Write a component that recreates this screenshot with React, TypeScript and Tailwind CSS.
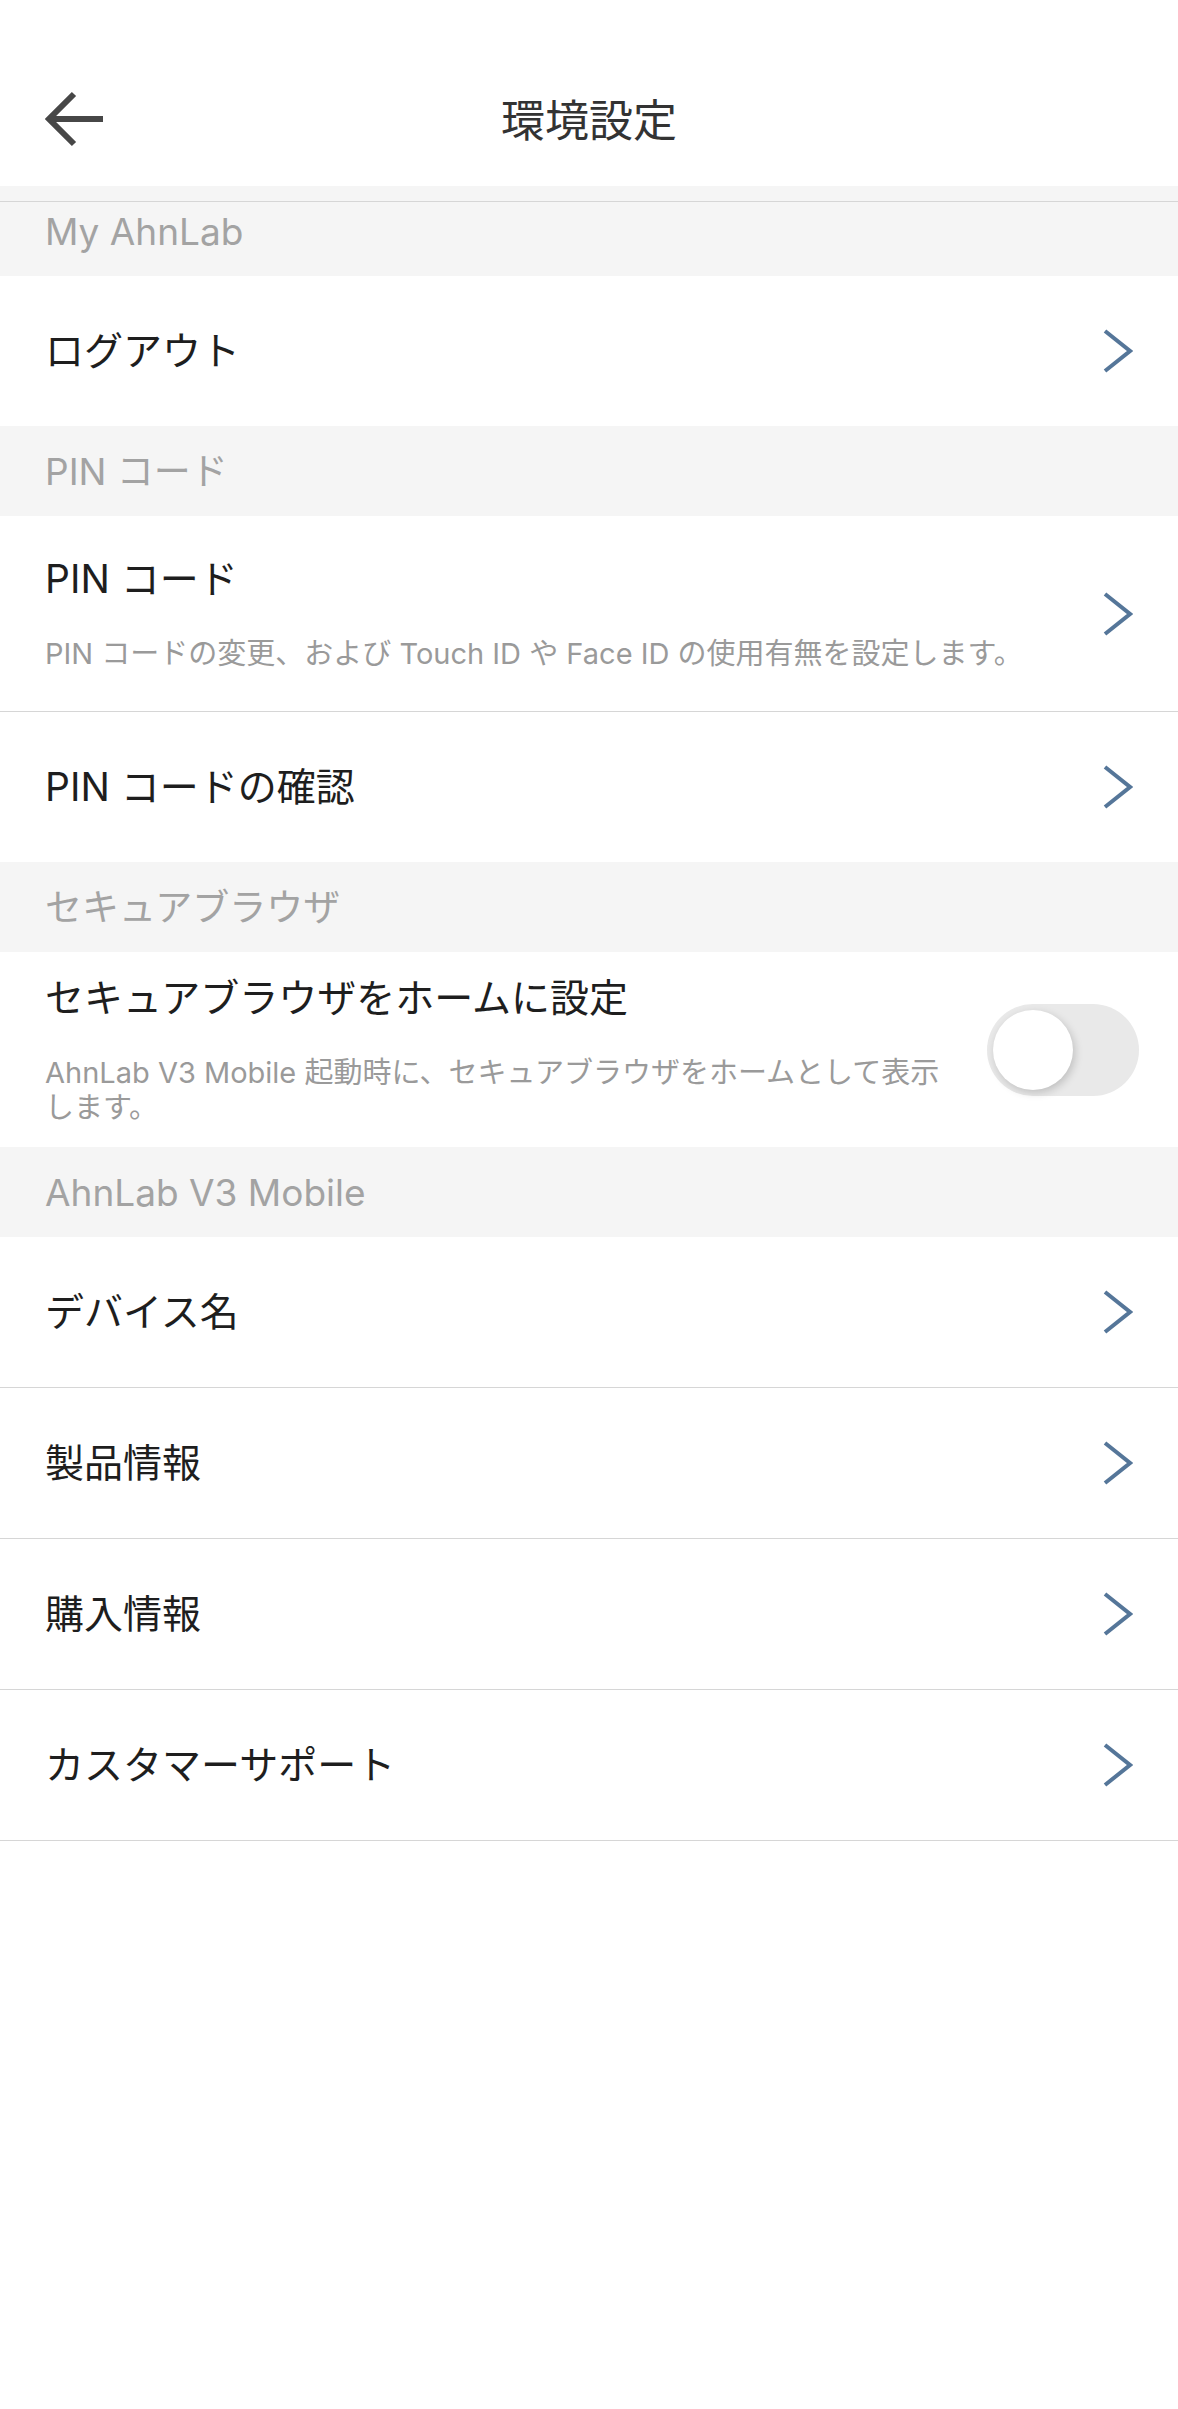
import { ReactNode } from 'react';

const font = { fontFamily: 'Inter, "Noto Sans CJK JP", sans-serif' };

function Chevron() {
  return (
    <svg width="30" height="44" viewBox="0 0 30 44" className="shrink-0">
      <polyline points="2,2 27,22 2,42" fill="none" stroke="#557699" strokeWidth="4" />
    </svg>
  );
}

function SectionHeader({ children }: { children: ReactNode }) {
  return (
    <div className="h-[90px] bg-[#f5f5f5] px-[45px] pt-[24px] text-[37px] leading-[44px] text-[#a3a3a3]">
      {children}
    </div>
  );
}

function Row({ title, border = true }: { title: string; border?: boolean }) {
  return (
    <div
      className={`flex items-center justify-between px-[45px] bg-white ${
        border ? 'h-[151px] border-b border-[#d6d6d6]' : 'h-[150px]'
      }`}
    >
      <span className="text-[39px] leading-[46px] text-[#1e1e1e]">{title}</span>
      <Chevron />
    </div>
  );
}

function Toggle() {
  return (
    <div className="relative -mr-[6px] h-[92px] w-[152px] shrink-0 rounded-full bg-[#e9e9e9]">
      <div className="absolute left-[6px] top-[6px] h-[80px] w-[80px] rounded-full bg-white shadow-[2px_3px_8px_rgba(0,0,0,0.18)]" />
    </div>
  );
}

export default function App() {
  return (
    <div className="min-h-[2409px] w-[1178px] bg-white" style={font}>
      {/* header */}
      <div className="relative flex h-[186px] items-center justify-center bg-white pt-[66px] pb-[10px]">
        <svg width="60" height="56" viewBox="0 0 60 56" className="absolute left-[45px] top-[91px]">
          <path d="M58 28 H4" fill="none" stroke="#474747" strokeWidth="6" />
          <path d="M29 3 L4 28 L29 53" fill="none" stroke="#474747" strokeWidth="6" />
        </svg>
        <span className="text-[44px] leading-[52px] text-[#333333]">環境設定</span>
      </div>

      {/* My AhnLab (scrolled under header) */}
      <div className="h-[90px] bg-[#f5f5f5]">
        <div className="h-[15px]" />
        <div className="border-t border-[#d6d6d6] px-[45px] pt-[8px] text-[37px] leading-[44px] text-[#a3a3a3]">
          My AhnLab
        </div>
      </div>
      <Row title="ログアウト" border={false} />

      <SectionHeader>PIN コード</SectionHeader>
      <div className="flex h-[196px] items-center justify-between border-b border-[#d6d6d6] px-[45px]">
        <div className="flex flex-col">
          <span className="mb-[34px] text-[39px] leading-[46px] text-[#1e1e1e]">PIN コード</span>
          <span className="text-[29px] leading-[35px] text-[#9a9a9a]">
            PIN コードの変更、および Touch ID や Face ID の使用有無を設定します。
          </span>
        </div>
        <Chevron />
      </div>
      <Row title="PIN コードの確認" border={false} />

      <SectionHeader>セキュアブラウザ</SectionHeader>
      <div className="flex h-[195px] items-center justify-between gap-[30px] px-[45px]">
        <div className="flex flex-col">
          <span className="mb-[34px] text-[39px] leading-[46px] text-[#1e1e1e]">セキュアブラウザをホームに設定</span>
          <span className="text-[29px] leading-[35px] text-[#9a9a9a]">
            AhnLab V3 Mobile 起動時に、セキュアブラウザをホームとして表示
            <br />
            します。
          </span>
        </div>
        <Toggle />
      </div>

      <SectionHeader>AhnLab V3 Mobile</SectionHeader>
      <Row title="デバイス名" />
      <Row title="製品情報" />
      <Row title="購入情報" />
      <Row title="カスタマーサポート" />
    </div>
  );
}
